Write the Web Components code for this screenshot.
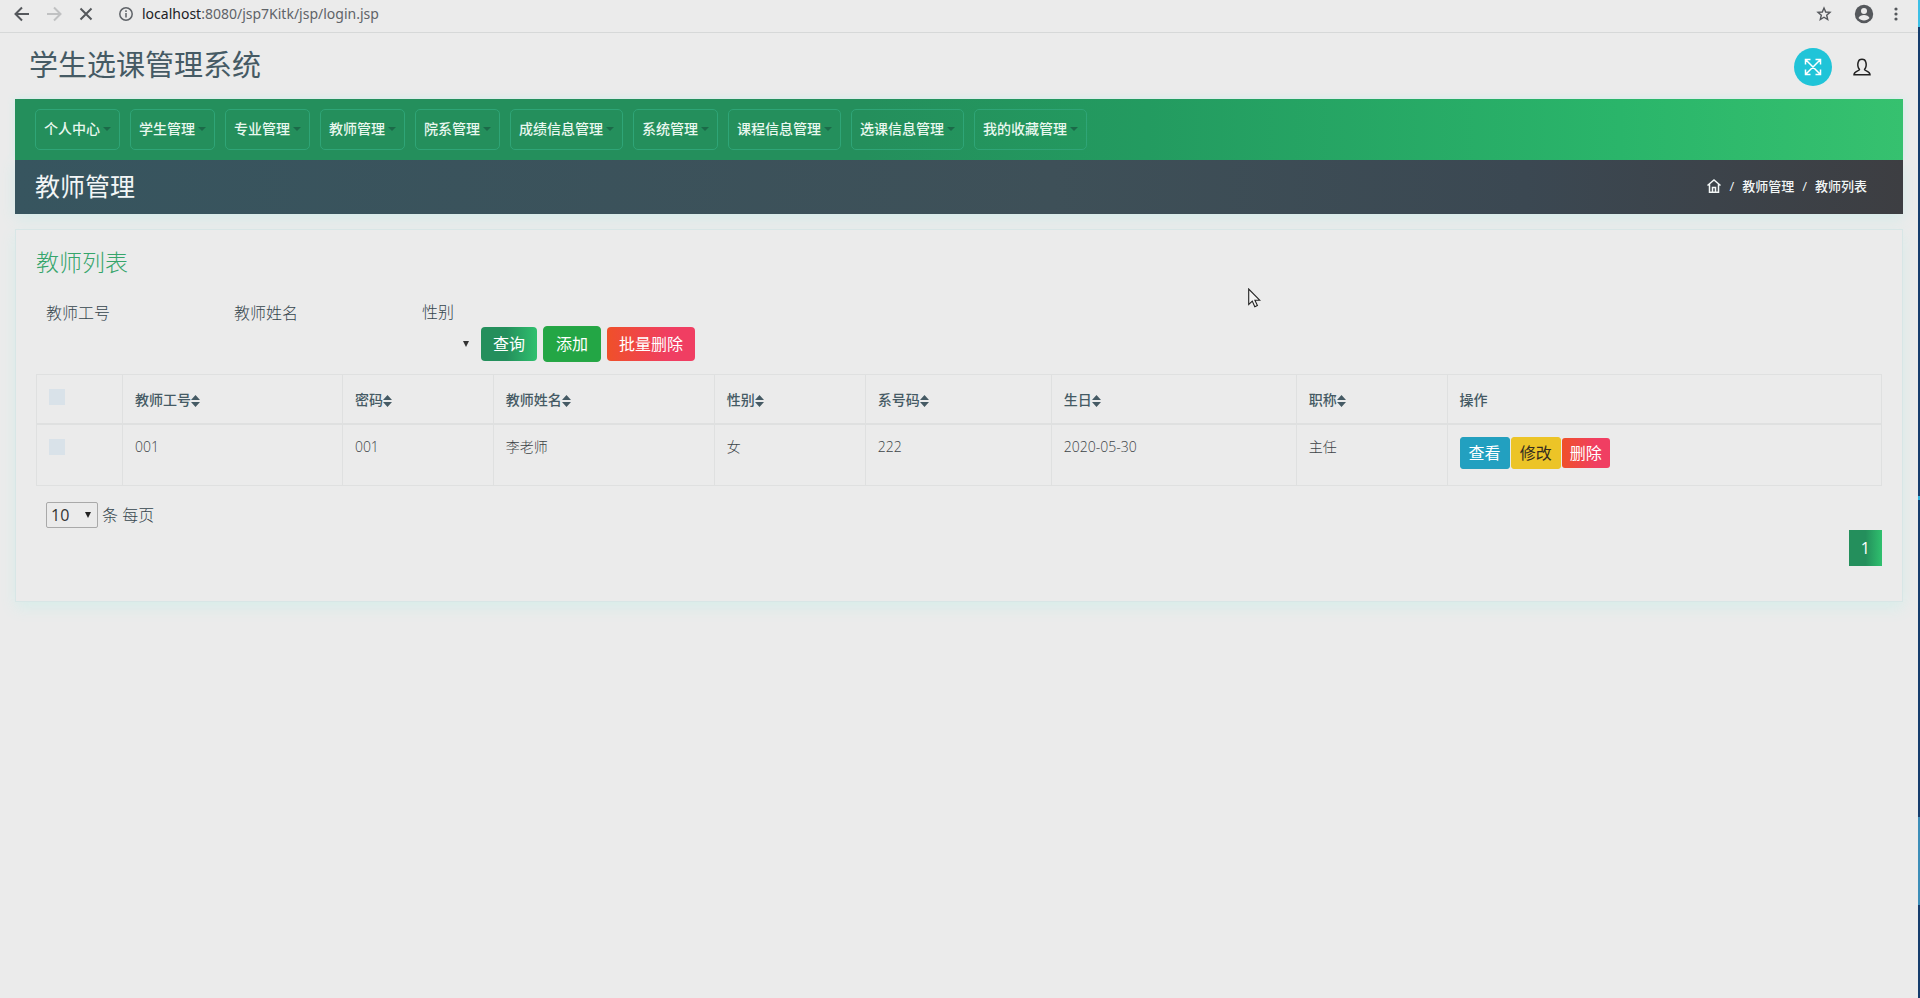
<!DOCTYPE html>
<html lang="zh-CN">
<head>
<meta charset="UTF-8">
<title>学生选课管理系统</title>
<style>
    body {
        margin: 0;
        min-height: 100vh;
        box-sizing: border-box;
        padding-right: 2px;
        /* 右侧露出的桌面边缘 */
        background: linear-gradient(#3cbfe6 0 27px, #153c6c 27px 496px, #2fb4e0 496px 500px, #153c6c 500px 817px, #3d8db8 817px 905px, #153c6c 905px) right top / 2px 100% no-repeat #ebebeb;
        color: #455a64;
        font: 16px/24px "Open Sans", "Noto Sans CJK SC", sans-serif;
    }
</style>
</head>
<body>
<browser-bar host="localhost" path=":8080/jsp7Kitk/jsp/login.jsp"></browser-bar>
<app-header>学生选课管理系统</app-header>
<app-main>
    <app-menu items="个人中心,学生管理,专业管理,教师管理,院系管理,成绩信息管理,系统管理,课程信息管理,选课信息管理,我的收藏管理"></app-menu>
    <page-title parent="教师管理" current="教师列表">教师管理</page-title>
    <list-card heading="教师列表">
        <search-form></search-form>
        <teacher-table></teacher-table>
        <page-footer></page-footer>
    </list-card>
</app-main>
<mouse-pointer></mouse-pointer>

<script>
/**
 * 组件基类：把静态模板写入 shadow root
 */
class BaseElement extends HTMLElement {
    constructor() {
        super();
        this.attachShadow({ mode: 'open' });
    }

    connectedCallback() {
        this.shadowRoot.innerHTML = this.render();
    }
}

/* 浏览器地址栏 */
class BrowserBar extends BaseElement {
    render() {
        return /* html */ `
<style>
    :host {
        display: flex;
        align-items: center;
        justify-content: space-between;
        height: 33px;
        padding: 0 16px 4px 12px;
        box-sizing: border-box;
        border-bottom: 1px solid #d6d8d8;
        color: #5f6368;
        font: 14px/20px "Noto Sans", sans-serif;
    }
    nav, .tools { display: flex; align-items: center; }
    nav { gap: 12px; }
    .tools { gap: 16px; }
    button { display: flex; padding: 0; border: 0; background: none; color: #55585c; }
    button:disabled { color: #c0c1c2; }
    svg { display: block; fill: none; stroke: currentColor; stroke-width: 2; }
    .url { display: flex; align-items: center; gap: 8px; margin-left: 10px; }
    b { font-weight: 400; color: #202124; }
</style>
<nav>
    <button aria-label="后退"><svg width="20" height="20" viewBox="0 0 20 20"><path d="M17 10H4M10 3.5L3.5 10l6.500 6.500"/></svg></button>
    <button aria-label="前进" disabled><svg width="20" height="20" viewBox="0 0 20 20"><path d="M3 10h13M10 3.500l6.500 6.500-6.500 6.500"/></svg></button>
    <button aria-label="停止"><svg width="20" height="20" viewBox="0 0 20 20"><path d="M4.500 4.500l11 11M15.500 4.500l-11 11"/></svg></button>
    <div class="url">
        <svg width="16" height="16" viewBox="0 0 16 16" style="stroke-width:1.500"><circle cx="8" cy="8" r="6.200"/><path d="M8 7v4.500M8 4.300v1.700"/></svg>
        <span><b>${this.getAttribute('host')}</b>${this.getAttribute('path')}</span>
    </div>
</nav>
<div class="tools">
    <button aria-label="收藏"><svg width="16" height="16" viewBox="0 0 16 16" style="stroke-width:1.400"><path d="M8 2l1.700 4 4.300.4-3.300 2.800 1 4.300L8 11.200l-3.700 2.300 1-4.300L2 6.400 6.300 6z"/></svg></button>
    <button aria-label="用户" style="margin-left:6px"><svg width="20" height="20" viewBox="0 0 20 20"><circle cx="10" cy="10" r="9.200" style="fill:currentColor;stroke:none"/><circle cx="10" cy="7" r="3" style="fill:#ebebeb;stroke:none"/><path d="M4.500 14c1.500-4 9.500-4 11 0-2.500 3.300-8.500 3.300-11 0z" style="fill:#ebebeb;stroke:none"/></svg></button>
    <button aria-label="菜单"><svg width="12" height="16" viewBox="0 0 12 16" style="fill:currentColor;stroke:none"><circle cx="6" cy="3" r="1.600"/><circle cx="6" cy="8" r="1.600"/><circle cx="6" cy="13" r="1.600"/></svg></button>
</div>`;
    }
}

/* 顶部标题 */
class AppHeader extends BaseElement {
    render() {
        return /* html */ `
<style>
    :host {
        display: flex;
        align-items: center;
        justify-content: space-between;
        box-sizing: border-box;
        height: 66px;
        padding: 2px 46px 0 29px;
    }
    h1 { margin: 0 0 4px; font-size: 29px; line-height: 40px; font-weight: 400; }
    div { display: flex; align-items: center; gap: 20px; }
    button { display: flex; align-items: center; justify-content: center; padding: 0; border: 0; background: none; color: #222; }
    .full { width: 38px; height: 38px; border-radius: 50%; background: #20c4d8; color: #fff; }
    svg { fill: none; stroke: currentColor; stroke-width: 1.500; }
</style>
<h1><slot></slot></h1>
<div>
    <button class="full" aria-label="全屏"><svg width="18" height="18" viewBox="0 0 18 18"><path d="M2 2l14 14M16 2L2 16M1.500 6.500v-5h5M11.500 1.500h5v5M16.500 11.500v5h-5M6.500 16.500h-5v-5"/></svg></button>
    <button aria-label="账户"><svg width="20" height="20" viewBox="0 0 20 20"><path d="M7.500 12.500C5.800 10.500 5.500 7.500 6.200 5 7 1.200 13 1.200 13.800 5c.7 2.500.4 5.500-1.300 7.500 0 1.500 5.500 1.600 5.500 5.200H2c0-3.600 5.500-3.700 5.500-5.200z"/></svg></button>
</div>`;
    }
}

class AppMain extends BaseElement {
    render() {
        return /* html */ `
<style>
    :host { display: block; padding: 0 15px; }
</style>
<slot></slot>`;
    }
}

/* 绿色主菜单 */
class AppMenu extends BaseElement {
    render() {
        const items = this.getAttribute('items').split(',');
        return /* html */ `
<style>
    :host {
        display: block;
        position: relative;
        padding: 10px 20px;
        background: linear-gradient(90deg, #248f5c 0%, #248f5c 45%, #239b60 60%, #2ab56a 85%, #36c16f 100%);
        box-shadow: 0 0 8px #cdeeea;
        clip-path: inset(-8px -8px 0 -8px);
    }
    nav { display: flex; flex-wrap: wrap; gap: 10px; }
    button {
        display: flex;
        align-items: center;
        gap: 3px;
        height: 41px;
        padding: 0 8px 2px;
        border: 1px solid #2fa577;
        border-radius: 5px;
        background: none;
        color: #e9f8ef;
        font: 500 14px/20px "Open Sans", "Noto Sans CJK SC", sans-serif;
    }
    i { border: 4px solid transparent; border-top-color: #1b6a48; border-bottom: 0; }
</style>
<nav>${items.map(t => `<button>${t}<i></i></button>`).join('')}</nav>`;
    }
}

/* 深色标题条与面包屑 */
class PageTitle extends BaseElement {
    render() {
        return /* html */ `
<style>
    :host {
        display: flex;
        align-items: center;
        justify-content: space-between;
        box-sizing: border-box;
        height: 54px;
        padding: 0 36px 2px 20px;
        background: linear-gradient(90deg, #37555f, #3e5058 55%, #3b4852 80%, #3d3e42);
        box-shadow: 0 4px 14px #d2ebe8;
        color: #f2f6f6;
    }
    h2 { margin: 0; font-size: 25px; line-height: 36px; font-weight: 400; }
    nav { display: flex; align-items: center; gap: 8px; font-size: 13px; line-height: 20px; font-weight: 500; }
    a { color: inherit; text-decoration: none; }
    svg { display: block; fill: none; stroke: currentColor; stroke-width: 1.500; }
</style>
<h2><slot></slot></h2>
<nav>
    <a href="#" aria-label="首页"><svg width="14" height="14" viewBox="0 0 14 14"><path d="M.5 6.500L7 1l6.500 5.500M2.500 5v8.300h9V5M5.500 13V8.500h3V13"/></svg></a>
    <span>/</span><a href="#">${this.getAttribute('parent')}</a><span>/</span><span>${this.getAttribute('current')}</span>
</nav>`;
    }
}

class ListCard extends BaseElement {
    render() {
        return /* html */ `
<style>
    :host {
        display: block;
        margin-top: 15px;
        padding: 14px 20px 35px;
        border: 1px solid #d8e6e6;
        background: #ebebeb;
        box-shadow: 0 6px 14px #d8edea;
    }
    h3 { margin: 0 0 16px; color: #36a56b; font-size: 23px; line-height: 36px; font-weight: 300; }
</style>
<h3>${this.getAttribute('heading')}</h3>
<slot></slot>`;
    }
}

/**
 * 按钮，type 决定配色
 */
class UiButton extends BaseElement {
    render() {
        return /* html */ `
<style>
    :host { display: block; }
    button {
        display: block;
        padding: 5px 12px;
        border: 0;
        border-radius: 4px;
        color: #fff;
        font: 16px/24px "Open Sans", "Noto Sans CJK SC", sans-serif;
    }
    :host([small]) button { padding: 3px 8px; border-radius: 3px; }
    :host([type=query]) button { background: linear-gradient(90deg, #248f5c 45%, #2fc06e); }
    :host([type=add]) button { border: 1px solid #28a745; background: #23a645; }
    :host([type=delete]) button { background: linear-gradient(90deg, #ef5029, #f03e62 70%); }
    :host([type=view]) button { border: 1px solid #259fbd; background: #22a0c0; }
    :host([type=edit]) button { border: 1px solid #ecc427; background: #ecc427; color: #332b20; }
</style>
<button><slot></slot></button>`;
    }
}

/* 查询条件 */
class SearchForm extends BaseElement {
    render() {
        return /* html */ `
<style>
    :host { display: block; padding-left: 10px; color: #36454d; font-weight: 300; }
    form { display: flex; align-items: flex-end; height: 66px; }
    .field { display: flex; flex-direction: column; width: 188px; height: 61px; }
    .field.sex { width: 52px; height: 62px; margin-right: 7px; }
    input, select {
        box-sizing: border-box;
        width: 100%;
        height: 36px;
        border: 0;
        background: none;
        appearance: none;
        outline: 0;
    }
    .field label { white-space: nowrap; }
    .pick { display: grid; align-items: center; justify-items: end; margin-top: 2px; }
    .pick > * { grid-area: 1 / 1; }
    .pick i { margin-right: 5px; border: 3px solid transparent; border-top: 6px solid #333; border-bottom: 0; }
    .actions { display: flex; align-items: center; gap: 6px; }
</style>
<form>
    <div class="field"><label for="no">教师工号</label><input id="no"></div>
    <div class="field"><label for="name">教师姓名</label><input id="name"></div>
    <div class="field sex"><label for="sex">性别</label><div class="pick"><select id="sex"><option></option></select><i></i></div></div>
    <div class="actions">
        <ui-button type="query">查询</ui-button>
        <ui-button type="add">添加</ui-button>
        <ui-button type="delete">批量删除</ui-button>
    </div>
</form>`;
    }
}

/* 教师数据表格 */
class TeacherTable extends BaseElement {
    get columns() {
        return [['教师工号', 220], ['密码', 151], ['教师姓名', 221], ['性别', 151], ['系号码', 186], ['生日', 245], ['职称', 151]];
    }

    get rows() {
        return [['001', '001', '李老师', '女', '222', '2020-05-30', '主任']];
    }

    render() {
        const sort = '<svg width="9" height="12" viewBox="0 0 9 12"><path d="M4.500 0L9 5H0zM4.500 12L0 7h9z"/></svg>';
        // 列宽按比例分配
        const total = 1845;
        const pct = w => `<col style="width:${(w / total * 100).toFixed(2)}%">`;
        return /* html */ `
<style>
    :host { display: block; margin-top: 12px; font-size: 14px; line-height: 20px; }
    table { width: 100%; table-layout: fixed; border-collapse: collapse; border: 1px solid #dfe0e0; }
    th, td { box-sizing: border-box; padding: 12px; border: 1px solid #dfe0e0; text-align: left; vertical-align: top; }
    th { height: 49px; padding-bottom: 13px; border-bottom-width: 2px; font-weight: 500; vertical-align: bottom; }
    th:first-child { padding-bottom: 0; vertical-align: top; }
    td { height: 62px; font-weight: 300; color: #3c4347; }
    svg { fill: #455a64; vertical-align: -2px; }
    input { display: block; width: 16px; height: 16px; margin: 2px 0 0; appearance: none; background: #d9e2e9; }
    .ops { display: flex; align-items: center; gap: 1px; }
</style>
<table>
    <colgroup>${pct(86)}${this.columns.map(c => pct(c[1])).join('')}<col></colgroup>
    <thead><tr>
        <th><input type="checkbox" aria-label="全选"></th>
        ${this.columns.map(c => `<th>${c[0]}${sort}</th>`).join('')}
        <th>操作</th>
    </tr></thead>
    <tbody>${this.rows.map(r => `<tr>
        <td><input type="checkbox" aria-label="选择 ${r[0]}"></td>
        ${r.map(v => `<td>${v}</td>`).join('')}
        <td><div class="ops">
            <ui-button small type="view">查看</ui-button>
            <ui-button small type="edit">修改</ui-button>
            <ui-button small type="delete">删除</ui-button>
        </div></td>
    </tr>`).join('')}</tbody>
</table>`;
    }
}

/* 每页条数与分页 */
class PageFooter extends BaseElement {
    render() {
        return /* html */ `
<style>
    :host { display: block; padding-top: 16px; color: #36454d; font-weight: 300; }
    label { display: flex; align-items: center; gap: 4px; padding-left: 10px; height: 26px; }
    .pick { display: grid; align-items: center; justify-items: end; width: 52px; }
    .pick > * { grid-area: 1 / 1; }
    .pick i { margin-right: 7px; border: 3px solid transparent; border-top: 6px solid #222; border-bottom: 0; }
    select {
        width: 100%;
        height: 26px;
        padding: 0 4px;
        border: 1px solid #a9a9a9;
        border-radius: 2px;
        background: none;
        appearance: none;
        color: #333;
        font: 16px/24px "Open Sans", sans-serif;
    }
    nav { display: flex; justify-content: flex-end; margin-top: 2px; }
    a { padding: 6px 12px; background: linear-gradient(90deg, #248f5c 50%, #2fc06e); color: #fff; font-weight: 400; text-decoration: none; }
</style>
<label><span class="pick"><select><option>10</option></select><i></i></span>条 每页</label>
<nav><a href="#">1</a></nav>`;
    }
}

/* 鼠标指针，浮在页面之上 */
class MousePointer extends BaseElement {
    render() {
        return /* html */ `
<style>
    :host { position: absolute; left: 65%; top: 288px; pointer-events: none; }
    svg { display: block; }
</style>
<svg width="13" height="20" viewBox="0 0 13 20"><path d="M.7 1v15.500l3.600-3.400 2.500 5.700 2.600-1.200-2.500-5.300h5z" fill="#f4f4f4" stroke="#222" stroke-width="1.100"/></svg>`;
    }
}

customElements.define('ui-button', UiButton);
customElements.define('browser-bar', BrowserBar);
customElements.define('app-header', AppHeader);
customElements.define('app-main', AppMain);
customElements.define('app-menu', AppMenu);
customElements.define('page-title', PageTitle);
customElements.define('list-card', ListCard);
customElements.define('search-form', SearchForm);
customElements.define('teacher-table', TeacherTable);
customElements.define('page-footer', PageFooter);
customElements.define('mouse-pointer', MousePointer);
</script>
</body>
</html>
